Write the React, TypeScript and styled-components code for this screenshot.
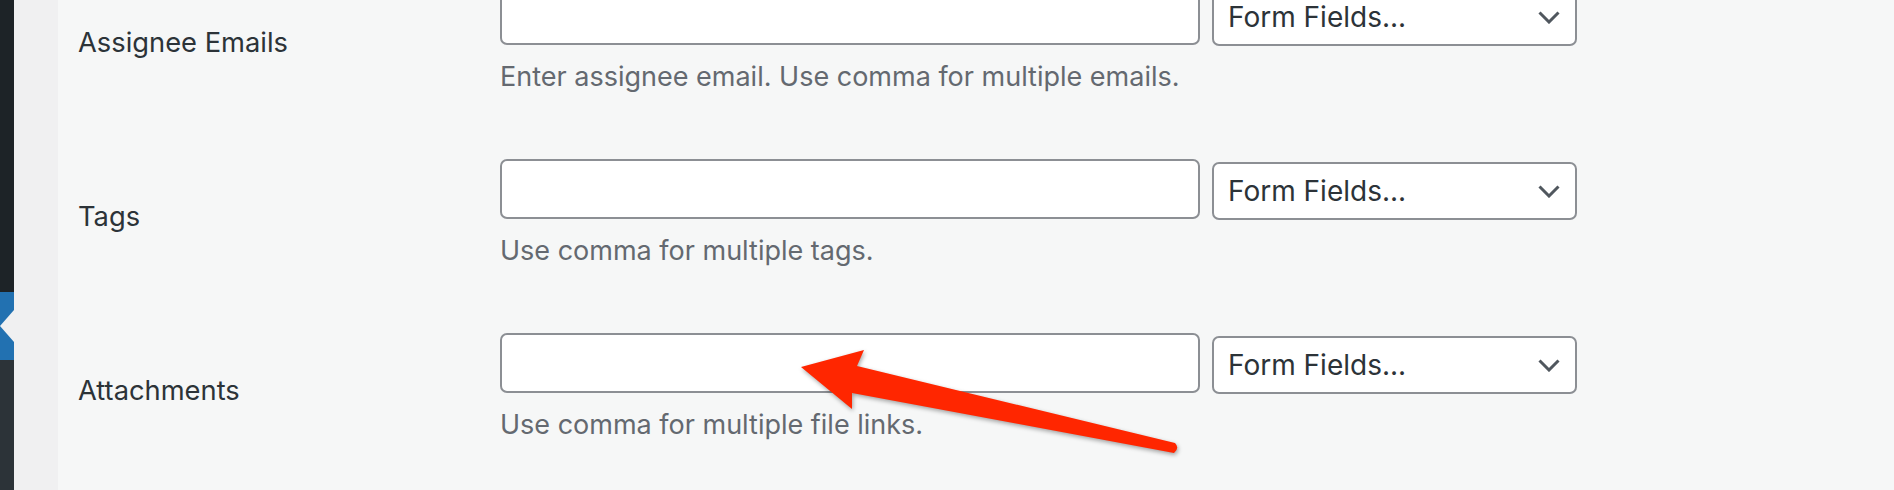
import React from "react";
import styled, { createGlobalStyle } from "styled-components";

/* ===============================
   Global
================================ */

const GlobalStyle = createGlobalStyle`
  html, body {
    margin: 0;
    padding: 0;
    background: #f6f7f7;
  }

  * {
    box-sizing: border-box;
  }
`;

/* ===============================
   Shell
================================ */

const Shell = styled.div`
  position: relative;
  display: flex;
  width: 1894px;
  height: 490px;
  overflow: hidden;
  font-family: Inter, "Noto Sans", "Liberation Sans", sans-serif;
`;

/* ===============================
   Admin menu strip
================================ */

const Sidebar = styled.div`
  width: 14px;
  flex: 0 0 14px;
  display: flex;
  flex-direction: column;
  background: #2c3338;
`;

const MenuTop = styled.div`
  flex: 0 0 292px;
  background: #1d2327;
`;

const MenuCurrent = styled.div`
  position: relative;
  flex: 0 0 68px;
  background: #2271b1;

  &::after {
    content: "";
    position: absolute;
    right: 0;
    top: 18px;
    width: 0;
    height: 0;
    border-top: 16px solid transparent;
    border-bottom: 16px solid transparent;
    border-right: 14px solid #f0f0f1;
  }
`;

const Gutter = styled.div`
  flex: 0 0 44px;
  background: #f0f0f1;
`;

/* ===============================
   Main content
================================ */

const Main = styled.main`
  flex: 1;
  padding-left: 20px;
  background: #f6f7f7;
`;

const FormTable = styled.div`
  margin-top: -35px;
  display: flex;
  flex-direction: column;
`;

const Row = styled.div`
  display: grid;
  grid-template-columns: 422px 1fr;
  padding: 20px 0 43px;
`;

const Label = styled.label`
  padding-top: 40px;
  font-size: 27.3px;
  line-height: 1.3;
  color: #2c3338;
`;

const Field = styled.div`
  display: flex;
  flex-direction: column;
`;

const FieldLine = styled.div`
  display: flex;
  align-items: flex-start;
  gap: 12px;
`;

const TextInput = styled.input`
  width: 700px;
  height: 60px;
  margin: 0;
  padding: 0 16px;
  border: 2px solid #8c8f94;
  border-radius: 7px;
  background: #fff;
  font: inherit;
  font-size: 28px;
  color: #2c3338;
  outline: none;
`;

const SelectBox = styled.div`
  width: 365px;
  height: 58px;
  margin-top: 3px;
  padding: 0 15px 0 14px;
  display: flex;
  align-items: center;
  justify-content: space-between;
  border: 2px solid #8c8f94;
  border-radius: 7px;
  background: #fff;
  font-size: 28px;
  color: #2c3338;
`;

const Help = styled.p`
  margin: 11px 0 0;
  font-size: 27px;
  line-height: 39px;
  color: #646970;
`;

/* ===============================
   Annotation arrow
================================ */

const Annotation = styled.svg`
  position: absolute;
  left: 0;
  top: 0;
  pointer-events: none;
  filter: drop-shadow(1px 2px 2px rgba(0, 0, 0, 0.35));
`;

const Chevron = () => (
  <svg width="22" height="13" viewBox="0 0 22 13">
    <path
      d="M1.5 1.5 L11 11 L20.5 1.5"
      fill="none"
      stroke="#50575e"
      strokeWidth="3"
    />
  </svg>
);

const rows = [
  {
    label: "Assignee Emails",
    help: "Enter assignee email. Use comma for multiple emails.",
  },
  { label: "Tags", help: "Use comma for multiple tags." },
  { label: "Attachments", help: "Use comma for multiple file links." },
];

export default function App() {
  return (
    <>
      <GlobalStyle />
      <Shell>
        <Sidebar>
          <MenuTop />
          <MenuCurrent />
        </Sidebar>
        <Gutter />

        <Main>
          <FormTable>
            {rows.map((r) => (
              <Row key={r.label}>
                <Label>{r.label}</Label>
                <Field>
                  <FieldLine>
                    <TextInput type="text" />
                    <SelectBox>
                      <span>Form Fields...</span>
                      <Chevron />
                    </SelectBox>
                  </FieldLine>
                  <Help>{r.help}</Help>
                </Field>
              </Row>
            ))}
          </FormTable>
        </Main>

        <Annotation width="1894" height="490" viewBox="0 0 1894 490">
          <path
            d="M801 367 L864 350 L857 366 L1175 443 Q1180 448 1174 453 L852 393 L852 409 Z"
            fill="#ff2600"
          />
        </Annotation>
      </Shell>
    </>
  );
}
